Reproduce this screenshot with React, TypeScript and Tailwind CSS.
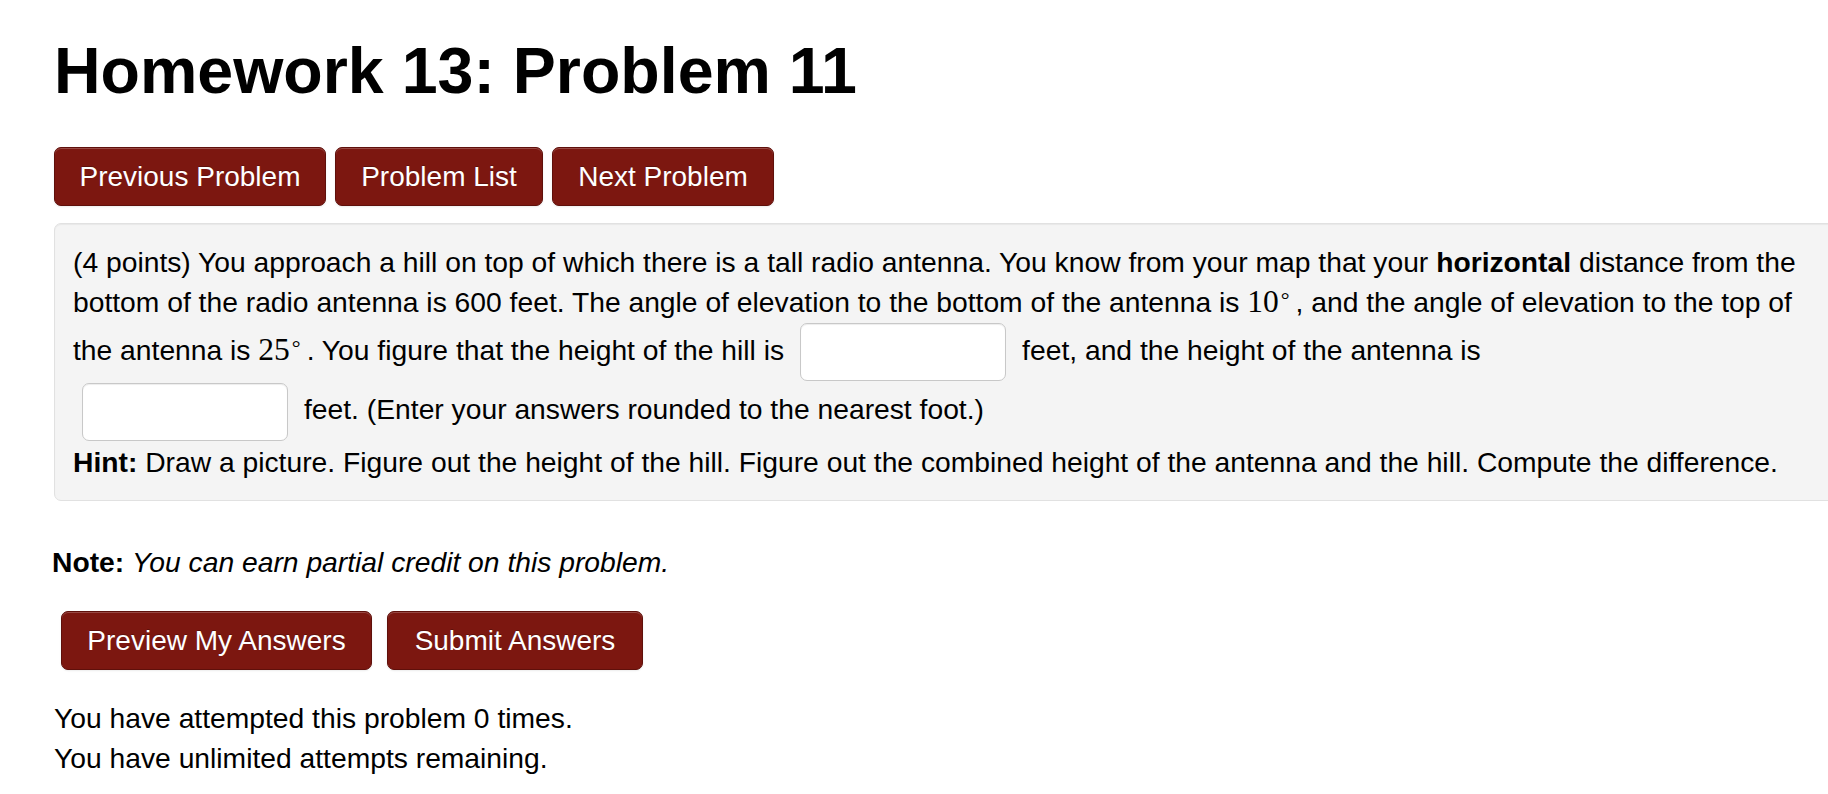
import React from "react";

const btn =
  "flex h-[59px] items-center justify-center rounded-[7px] border border-[#5f100b] bg-[#7c1710] text-[28px] text-white shadow-[inset_0_1px_0_rgba(255,255,255,0.22),0_1px_2px_rgba(0,0,0,0.08)] [text-shadow:0_-1px_0_rgba(0,0,0,0.25)]";

const answerBox =
  "h-[58px] w-[206px] rounded-[7px] border border-[#c8c8c8] bg-white shadow-[inset_0_1px_1px_rgba(0,0,0,0.075)] outline-none";

function Deg({ n }: { n: string }) {
  return (
    <span className="font-['Liberation_Serif','Times_New_Roman',serif] text-[31.5px] leading-none">
      {n}
      <span className="relative top-[-5px] ml-[2px] mr-[6px] text-[22px] leading-none">°</span>
    </span>
  );
}

export default function App() {
  return (
    <div className="min-h-[794px] w-full overflow-hidden bg-white pl-[54px] font-['Liberation_Sans',Arial,Helvetica,sans-serif] text-[28.25px] leading-[40px] text-black">
      <h1 className="mt-[31px] text-[64.5px] font-bold leading-[80px]">
        Homework 13: Problem 11
      </h1>

      <div className="mt-[36px] flex gap-[9px]">
        <button className={`${btn} w-[272px]`}>Previous Problem</button>
        <button className={`${btn} w-[208px]`}>Problem List</button>
        <button className={`${btn} w-[222px]`}>Next Problem</button>
      </div>

      <div className="mt-[17px] w-[1840px] rounded-[7px] border border-[#e1e1e1] bg-[#f4f4f4] py-[18px] pl-[18px] shadow-[inset_0_1px_1px_rgba(0,0,0,0.05)]">
        <div className="whitespace-nowrap">
          (4 points) You approach a hill on top of which there is a tall radio antenna. You know
          from your map that your <b>horizontal</b> distance from the
        </div>
        <div className="whitespace-nowrap">
          bottom of the radio antenna is 600 feet. The angle of elevation to the bottom of the
          antenna is <Deg n="10" />, and the angle of elevation to the top of
        </div>
        <div className="flex h-[60px] items-start whitespace-nowrap">
          <span className="mt-[8px]">
            the antenna is <Deg n="25" />. You figure that the height of the hill is
          </span>
          <input type="text" aria-label="height of the hill" className={`${answerBox} mx-[16px] mt-[1px]`} />
          <span className="mt-[8px]">feet, and the height of the antenna is</span>
        </div>
        <div className="flex h-[60px] items-start whitespace-nowrap">
          <input type="text" aria-label="height of the antenna" className={`${answerBox} ml-[9px] mr-[16px] mt-[1px]`} />
          <span className="mt-[7px]">feet. (Enter your answers rounded to the nearest foot.)</span>
        </div>
        <div className="whitespace-nowrap">
          <b>Hint:</b> Draw a picture. Figure out the height of the hill. Figure out the combined
          height of the antenna and the hill. Compute the difference.
        </div>
      </div>

      <p className="-ml-[2px] mt-[41px]">
        <b>Note:</b> <i>You can earn partial credit on this problem.</i>
      </p>

      <div className="ml-[7px] mt-[29px] flex gap-[15px]">
        <button className={`${btn} w-[311px]`}>Preview My Answers</button>
        <button className={`${btn} w-[256px]`}>Submit Answers</button>
      </div>

      <div className="mt-[28px] pb-[8px]">
        <div>You have attempted this problem 0 times.</div>
        <div>You have unlimited attempts remaining.</div>
      </div>
    </div>
  );
}
